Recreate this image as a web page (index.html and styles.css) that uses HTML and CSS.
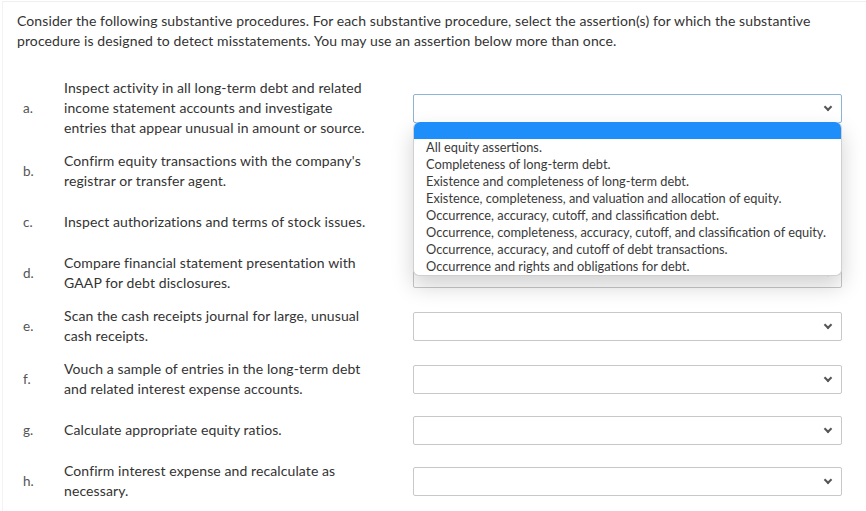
FILE: index.html
```html
<!DOCTYPE html>
<html lang="en">
<head>
    <meta charset="UTF-8">
    <title>Substantive Procedures</title>
    <link rel="stylesheet" href="styles.css">
</head>
<body>

    <div class="panel">
        <p class="intro">Consider the following substantive procedures. For each substantive procedure, select the assertion(s) for which the substantive procedure is designed to detect misstatements. You may use an assertion below more than once.</p>

        <div class="rows">
            <div class="row">
                <span class="letter">a.</span>
                <span class="proc">Inspect activity in all long-term debt and related income statement accounts and investigate entries that appear unusual in amount or source.</span>
                <div class="pick">
                    <div class="select focused"><span class="chev"></span></div>
                    <ul class="menu">
                        <li class="active"></li>
                        <li>All equity assertions.</li>
                        <li>Completeness of long-term debt.</li>
                        <li>Existence and completeness of long-term debt.</li>
                        <li>Existence, completeness, and valuation and allocation of equity.</li>
                        <li>Occurrence, accuracy, cutoff, and classification debt.</li>
                        <li>Occurrence, completeness, accuracy, cutoff, and classification of equity.</li>
                        <li>Occurrence, accuracy, and cutoff of debt transactions.</li>
                        <li>Occurrence and rights and obligations for debt.</li>
                    </ul>
                </div>
            </div>
            <div class="row">
                <span class="letter">b.</span>
                <span class="proc">Confirm equity transactions with the company's registrar or transfer agent.</span>
                <div class="pick"><div class="select"><span class="chev"></span></div></div>
            </div>
            <div class="row">
                <span class="letter">c.</span>
                <span class="proc">Inspect authorizations and terms of stock issues.</span>
                <div class="pick"><div class="select"><span class="chev"></span></div></div>
            </div>
            <div class="row">
                <span class="letter">d.</span>
                <span class="proc">Compare financial statement presentation with GAAP for debt disclosures.</span>
                <div class="pick"><div class="select"><span class="chev"></span></div></div>
            </div>
            <div class="row">
                <span class="letter">e.</span>
                <span class="proc">Scan the cash receipts journal for large, unusual cash receipts.</span>
                <div class="pick"><div class="select"><span class="chev"></span></div></div>
            </div>
            <div class="row">
                <span class="letter">f.</span>
                <span class="proc">Vouch a sample of entries in the long-term debt and related interest expense accounts.</span>
                <div class="pick"><div class="select"><span class="chev"></span></div></div>
            </div>
            <div class="row">
                <span class="letter">g.</span>
                <span class="proc">Calculate appropriate equity ratios.</span>
                <div class="pick"><div class="select"><span class="chev"></span></div></div>
            </div>
            <div class="row">
                <span class="letter">h.</span>
                <span class="proc">Confirm interest expense and recalculate as necessary.</span>
                <div class="pick"><div class="select"><span class="chev"></span></div></div>
            </div>
        </div>
    </div>

</body>
</html>
```

FILE: styles.css
```css
body {
    margin: 0;
    font-family: 'Lato', 'Liberation Sans', sans-serif;
    background: #fff;
    color: #333;
}

.panel {
    margin: 1px 0 0 2px;
    border-top: 1px solid #efefef;
    border-left: 1px solid #f3f3f3;
    height: 520px;
}

.intro {
    margin: 0;
    padding: 9px 30px 0 14px;
    font-size: 14px;
    line-height: 20px;
    letter-spacing: 0.1px;
}

.rows {
    display: flex;
    flex-direction: column;
    gap: 13px;
    margin-top: 27px;
}

.row {
    display: flex;
    align-items: center;
    min-height: 36px;
}

.letter {
    width: 20px;
    margin-left: 20px;
    margin-right: 21px;
    font-size: 13.5px;
    color: #555;
}

.proc {
    width: 308px;
    font-size: 14px;
    line-height: 20px;
    letter-spacing: 0.1px;
}

.pick {
    position: relative;
    margin-left: 41px;
}

.select {
    position: relative;
    width: 427px;
    height: 27px;
    border: 1px solid #c8c8c8;
    border-radius: 2px;
    background: #fff;
}

.select.focused {
    border-color: #8db3d6;
}

.chev {
    position: absolute;
    right: 10px;
    top: 9px;
    width: 4px;
    height: 4px;
    border-right: 2px solid #555;
    border-bottom: 2px solid #555;
    transform: rotate(45deg);
}

.menu {
    position: absolute;
    left: 0;
    top: 28px;
    width: 427px;
    margin: 0;
    padding: 0;
    list-style: none;
    background: #fff;
    border: 1px solid #d0d0d0;
    border-top: none;
    border-radius: 6px;
    box-shadow: 0 10px 22px rgba(0, 0, 0, 0.18);
    z-index: 2;
}

.menu li {
    height: 17px;
    line-height: 17px;
    padding-left: 12px;
    font-size: 12.8px;
    color: #3a3a3a;
    white-space: nowrap;
}

.menu li.active {
    background: #1e8ffa;
    border-radius: 6px 6px 0 0;
}
```
